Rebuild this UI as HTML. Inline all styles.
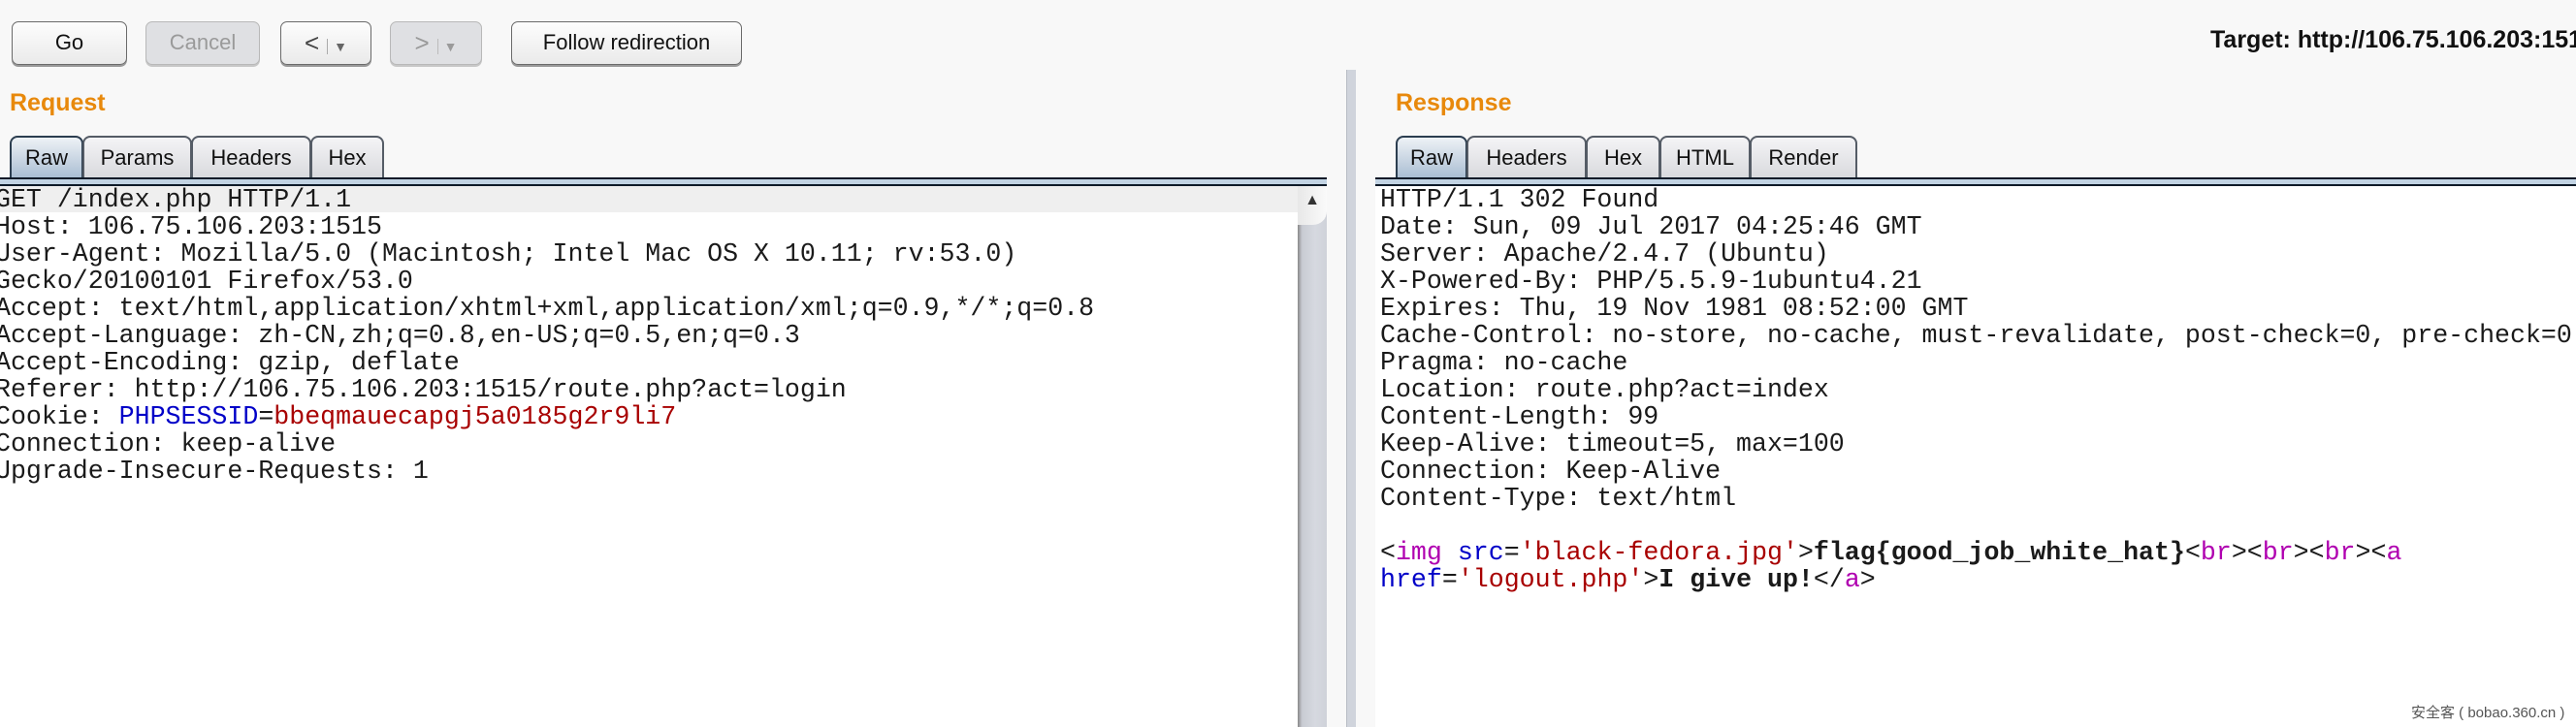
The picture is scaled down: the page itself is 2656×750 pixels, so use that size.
<!DOCTYPE html>
<html><head><meta charset="utf-8"><style>
*{margin:0;padding:0;box-sizing:border-box}
body{width:2656px;height:750px;overflow:hidden;background:#f8f8f8;position:relative;font-family:"Liberation Sans",sans-serif}
.btn{position:absolute;top:22px;height:45px;border:1.5px solid #6a6a6a;border-radius:7px;background:linear-gradient(#fdfdfd,#eaeaea);font-size:22px;text-align:center;line-height:42px;color:#111;box-shadow:0 2px 0 #9a9a9a}
.dis{background:#dfe0e3;color:#9a9a9a;border-color:#b8b8b8;box-shadow:0 2px 0 #c8c8c8}
.title{position:absolute;top:92px;font-size:25px;font-weight:bold;color:#e8890c}
.tab{position:absolute;top:140px;height:44px;border:2px solid #555c66;border-bottom:none;border-radius:8px 8px 0 0;background:linear-gradient(#f4f4f6,#d8d9dd);font-size:22px;text-align:center;line-height:42px;color:#111}
.tab.act{background:linear-gradient(#eef2f6,#a9bdd2);border-color:#2c3e50}
.band{position:absolute;top:183px;height:9px;background:#c2d3e3;border-top:2px solid #0e1a28;border-bottom:2px solid #0e1a28}
.ed{position:absolute;top:192px;bottom:0;background:#fff;overflow:hidden}
pre{font-family:"Liberation Mono","Courier New",monospace;font-size:26.6px;line-height:28px;color:#1a1a1a;white-space:pre}
.b{color:#0000c8}.r{color:#a80000}.p{color:#b000b0}.k{font-weight:bold}
</style></head><body>
<div class="btn" style="left:12px;width:119px">Go</div>
<div class="btn dis" style="left:150px;width:118px">Cancel</div>
<div class="btn" style="left:289px;width:94px;font-size:26px;color:#444">&lt;<span style="font-size:14px;color:#666;border-left:1px solid #aaa;padding-left:6px;margin-left:8px">▼</span></div>
<div class="btn dis" style="left:402px;width:95px;font-size:26px">&gt;<span style="font-size:14px;border-left:1px solid #bbb;padding-left:6px;margin-left:8px">▼</span></div>
<div class="btn" style="left:527px;width:238px">Follow redirection</div>
<div style="position:absolute;left:2279px;top:27px;font-size:25px;font-weight:bold;white-space:nowrap;color:#111">Target: http://106.75.106.203:1515</div>

<div class="title" style="left:10px">Request</div>
<div class="tab act" style="left:10px;width:76px">Raw</div>
<div class="tab" style="left:85px;width:113px">Params</div>
<div class="tab" style="left:197px;width:124px">Headers</div>
<div class="tab" style="left:320px;width:76px">Hex</div>
<div class="band" style="left:0;width:1368px"></div>
<div class="ed" style="left:0;width:1338px">
<div style="position:absolute;top:0;left:0;right:0;height:27px;background:#efefef"></div>
<pre style="position:relative;margin-left:-5px">GET /index.php HTTP/1.1
Host: 106.75.106.203:1515
User-Agent: Mozilla/5.0 (Macintosh; Intel Mac OS X 10.11; rv:53.0)
Gecko/20100101 Firefox/53.0
Accept: text/html,application/xhtml+xml,application/xml;q=0.9,*/*;q=0.8
Accept-Language: zh-CN,zh;q=0.8,en-US;q=0.5,en;q=0.3
Accept-Encoding: gzip, deflate
Referer: http://106.75.106.203:1515/route.php?act=login
Cookie: <span class="b">PHPSESSID</span>=<span class="r">bbeqmauecapgj5a0185g2r9li7</span>
Connection: keep-alive
Upgrade-Insecure-Requests: 1</pre></div>
<div style="position:absolute;left:1338px;top:192px;width:30px;bottom:0;background:linear-gradient(90deg,#888 0,#c8cbd2 15%,#d6d9e0 60%,#cfd2d9)"></div>
<div style="position:absolute;left:1338px;top:192px;width:30px;height:40px;background:linear-gradient(90deg,#e8e8e8,#fafafa);border-bottom-right-radius:14px;text-align:center;font-size:16px;line-height:30px;color:#333">▲</div>

<div style="position:absolute;left:1388px;top:72px;width:10px;bottom:0;background:#d0d4dc;border-left:1px solid #b8bcc4"></div>

<div class="title" style="left:1439px">Response</div>
<div class="tab act" style="left:1439px;width:74px">Raw</div>
<div class="tab" style="left:1512px;width:124px">Headers</div>
<div class="tab" style="left:1635px;width:77px">Hex</div>
<div class="tab" style="left:1711px;width:94px">HTML</div>
<div class="tab" style="left:1804px;width:111px">Render</div>
<div class="band" style="left:1418px;right:0"></div>
<div class="ed" style="left:1418px;right:0">
<pre style="margin-left:5px">HTTP/1.1 302 Found
Date: Sun, 09 Jul 2017 04:25:46 GMT
Server: Apache/2.4.7 (Ubuntu)
X-Powered-By: PHP/5.5.9-1ubuntu4.21
Expires: Thu, 19 Nov 1981 08:52:00 GMT
Cache-Control: no-store, no-cache, must-revalidate, post-check=0, pre-check=0
Pragma: no-cache
Location: route.php?act=index
Content-Length: 99
Keep-Alive: timeout=5, max=100
Connection: Keep-Alive
Content-Type: text/html

&lt;<span class="p">img</span> <span class="b">src</span>=<span class="r">'black-fedora.jpg'</span>&gt;<span class="k">flag{good_job_white_hat}</span>&lt;<span class="p">br</span>&gt;&lt;<span class="p">br</span>&gt;&lt;<span class="p">br</span>&gt;&lt;<span class="p">a</span>
<span class="b">href</span>=<span class="r">'logout.php'</span>&gt;<span class="k">I give up!</span>&lt;/<span class="p">a</span>&gt;</pre></div>
<div style="position:absolute;left:2486px;top:724px;font-size:15px;color:#555;font-family:'Liberation Sans','Noto Sans CJK SC',sans-serif;white-space:nowrap">安全客 ( bobao.360.cn )</div>
</body></html>
